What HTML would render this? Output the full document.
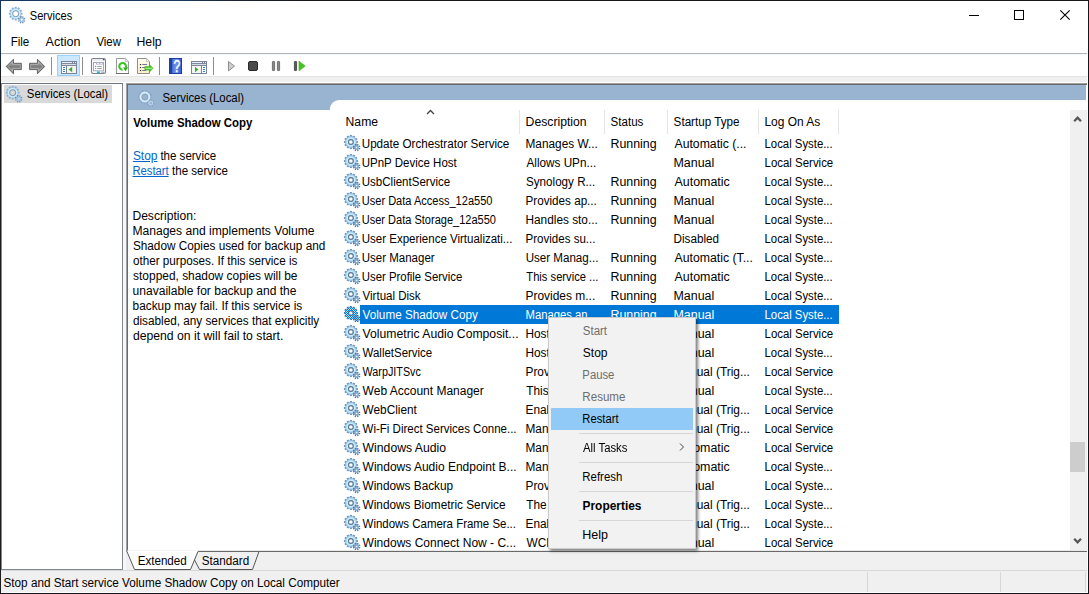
<!DOCTYPE html>
<html lang="en"><head><meta charset="utf-8"><title>Services</title>
<style>
html,body{margin:0;padding:0;}
body{width:1089px;height:594px;overflow:hidden;position:relative;background:#fff;font-family:"Liberation Sans",sans-serif;font-size:12px;line-height:14px;color:#000;}
body div,body span,body svg{position:absolute;}
.t{white-space:pre;transform-origin:0 0;}
.g,.a{overflow:visible;}
.clip{overflow:hidden;}
.menu{background:#f2f2f2;border:1px solid #ccc;box-sizing:border-box;box-shadow:2px 2px 3px rgba(0,0,0,.5);}
</style></head><body>
<svg style="position:absolute;left:0;top:0" width="0" height="0" aria-hidden="true"><defs>
<linearGradient id="ga" x1="0" y1="0" x2="0" y2="1"><stop offset="0" stop-color="#b4b4b4"/><stop offset=".5" stop-color="#7e7e7e"/><stop offset="1" stop-color="#a2a2a2"/></linearGradient>
<linearGradient id="gh" x1="0" y1="0" x2="1" y2="0"><stop offset="0" stop-color="#2a4fc4"/><stop offset=".3" stop-color="#5b7de0"/><stop offset=".6" stop-color="#6f8fe8"/><stop offset="1" stop-color="#2f56cf"/></linearGradient>
<linearGradient id="gp" x1="0" y1="0" x2="0" y2="1"><stop offset="0" stop-color="#fffdf0"/><stop offset="1" stop-color="#fbf0c8"/></linearGradient>
<radialGradient id="gg" cx="6.9" cy="7" r="6" gradientUnits="userSpaceOnUse"><stop offset=".34" stop-color="#7fa6cc"/><stop offset=".6" stop-color="#cdeefa"/><stop offset=".8" stop-color="#aed6ee"/><stop offset="1" stop-color="#7aa6d0"/></radialGradient>
<g id="gear">
 <g fill="#6c94c0"><rect x="5.90" y="0.00" width="2.0" height="2.40" transform="rotate(0.0 6.9 7)"/><rect x="5.90" y="0.00" width="2.0" height="2.40" transform="rotate(30.0 6.9 7)"/><rect x="5.90" y="0.00" width="2.0" height="2.40" transform="rotate(60.0 6.9 7)"/><rect x="5.90" y="0.00" width="2.0" height="2.40" transform="rotate(90.0 6.9 7)"/><rect x="5.90" y="0.00" width="2.0" height="2.40" transform="rotate(120.0 6.9 7)"/><rect x="5.90" y="0.00" width="2.0" height="2.40" transform="rotate(150.0 6.9 7)"/><rect x="5.90" y="0.00" width="2.0" height="2.40" transform="rotate(180.0 6.9 7)"/><rect x="5.90" y="0.00" width="2.0" height="2.40" transform="rotate(210.0 6.9 7)"/><rect x="5.90" y="0.00" width="2.0" height="2.40" transform="rotate(240.0 6.9 7)"/><rect x="5.90" y="0.00" width="2.0" height="2.40" transform="rotate(270.0 6.9 7)"/><rect x="5.90" y="0.00" width="2.0" height="2.40" transform="rotate(300.0 6.9 7)"/><rect x="5.90" y="0.00" width="2.0" height="2.40" transform="rotate(330.0 6.9 7)"/></g>
 <circle cx="6.9" cy="7" r="3.95" fill="none" stroke="url(#gg)" stroke-width="3.9"/>
 <circle cx="6.9" cy="7" r="2.4" fill="none" stroke="#587592" stroke-width="1.1" stroke-opacity=".9"/>
 <g fill="#4f739c"><rect x="11.95" y="8.70" width="1.3" height="1.80" transform="rotate(22.5 12.6 12.5)"/><rect x="11.95" y="8.70" width="1.3" height="1.80" transform="rotate(67.5 12.6 12.5)"/><rect x="11.95" y="8.70" width="1.3" height="1.80" transform="rotate(112.5 12.6 12.5)"/><rect x="11.95" y="8.70" width="1.3" height="1.80" transform="rotate(157.5 12.6 12.5)"/><rect x="11.95" y="8.70" width="1.3" height="1.80" transform="rotate(202.5 12.6 12.5)"/><rect x="11.95" y="8.70" width="1.3" height="1.80" transform="rotate(247.5 12.6 12.5)"/><rect x="11.95" y="8.70" width="1.3" height="1.80" transform="rotate(292.5 12.6 12.5)"/><rect x="11.95" y="8.70" width="1.3" height="1.80" transform="rotate(337.5 12.6 12.5)"/></g>
 <circle cx="12.6" cy="12.5" r="1.6" fill="#f2f8fd" stroke="#86acd0" stroke-width="1.6"/>
</g>
<pattern id="chk" width="2" height="2" patternUnits="userSpaceOnUse"><rect x="0" y="0" width="1" height="1" fill="#0078d7"/><rect x="1" y="1" width="1" height="1" fill="#0078d7"/></pattern>
<mask id="gm" maskUnits="userSpaceOnUse" x="0" y="0" width="17" height="17">
 <g fill="#fff"><rect x="5.90" y="0.00" width="2.0" height="2.40" transform="rotate(0.0 6.9 7)"/><rect x="5.90" y="0.00" width="2.0" height="2.40" transform="rotate(30.0 6.9 7)"/><rect x="5.90" y="0.00" width="2.0" height="2.40" transform="rotate(60.0 6.9 7)"/><rect x="5.90" y="0.00" width="2.0" height="2.40" transform="rotate(90.0 6.9 7)"/><rect x="5.90" y="0.00" width="2.0" height="2.40" transform="rotate(120.0 6.9 7)"/><rect x="5.90" y="0.00" width="2.0" height="2.40" transform="rotate(150.0 6.9 7)"/><rect x="5.90" y="0.00" width="2.0" height="2.40" transform="rotate(180.0 6.9 7)"/><rect x="5.90" y="0.00" width="2.0" height="2.40" transform="rotate(210.0 6.9 7)"/><rect x="5.90" y="0.00" width="2.0" height="2.40" transform="rotate(240.0 6.9 7)"/><rect x="5.90" y="0.00" width="2.0" height="2.40" transform="rotate(270.0 6.9 7)"/><rect x="5.90" y="0.00" width="2.0" height="2.40" transform="rotate(300.0 6.9 7)"/><rect x="5.90" y="0.00" width="2.0" height="2.40" transform="rotate(330.0 6.9 7)"/><rect x="11.95" y="8.70" width="1.3" height="1.80" transform="rotate(22.5 12.6 12.5)"/><rect x="11.95" y="8.70" width="1.3" height="1.80" transform="rotate(67.5 12.6 12.5)"/><rect x="11.95" y="8.70" width="1.3" height="1.80" transform="rotate(112.5 12.6 12.5)"/><rect x="11.95" y="8.70" width="1.3" height="1.80" transform="rotate(157.5 12.6 12.5)"/><rect x="11.95" y="8.70" width="1.3" height="1.80" transform="rotate(202.5 12.6 12.5)"/><rect x="11.95" y="8.70" width="1.3" height="1.80" transform="rotate(247.5 12.6 12.5)"/><rect x="11.95" y="8.70" width="1.3" height="1.80" transform="rotate(292.5 12.6 12.5)"/><rect x="11.95" y="8.70" width="1.3" height="1.80" transform="rotate(337.5 12.6 12.5)"/></g>
 <circle cx="6.9" cy="7" r="3.95" fill="none" stroke="#fff" stroke-width="4.2"/>
 <circle cx="12.6" cy="12.5" r="1.6" fill="#fff" stroke="#fff" stroke-width="1.6"/>
</mask>
<g id="gearsel">
 <use href="#gear"/>
 <rect x="0" y="0" width="17" height="17" fill="url(#chk)" mask="url(#gm)" shape-rendering="crispEdges"/>
</g>
<g id="gearhdr">
 <circle cx="6.9" cy="7" r="6.1" fill="none" stroke="#7e9fc6" stroke-width="1.6" stroke-dasharray="2 1.194" stroke-dashoffset="1" stroke-opacity=".7"/>
 <circle cx="6.9" cy="7" r="4.3" fill="none" stroke="#c6e5f6" stroke-width="2.2"/>
 <circle cx="6.9" cy="7" r="4.6" fill="none" stroke="#eefaff" stroke-width=".9" stroke-opacity=".55"/>
 <circle cx="6.9" cy="7" r="3.1" fill="none" stroke="#8a8f9e" stroke-width=".7" stroke-opacity=".8"/>
 <circle cx="12.8" cy="13.1" r="3" fill="none" stroke="#6f8fb8" stroke-width="1.2" stroke-dasharray="1.2 1.156" stroke-opacity=".8"/>
 <circle cx="12.8" cy="13.1" r="1.9" fill="none" stroke="#b9d6ee" stroke-width="1.2"/>
</g>
<g id="gear2">
 <g fill="#86add6"><rect x="5.70" y="-0.10" width="2.0" height="2.20" transform="rotate(0.0 6.7 6.7)"/><rect x="5.70" y="-0.10" width="2.0" height="2.20" transform="rotate(30.0 6.7 6.7)"/><rect x="5.70" y="-0.10" width="2.0" height="2.20" transform="rotate(60.0 6.7 6.7)"/><rect x="5.70" y="-0.10" width="2.0" height="2.20" transform="rotate(90.0 6.7 6.7)"/><rect x="5.70" y="-0.10" width="2.0" height="2.20" transform="rotate(120.0 6.7 6.7)"/><rect x="5.70" y="-0.10" width="2.0" height="2.20" transform="rotate(150.0 6.7 6.7)"/><rect x="5.70" y="-0.10" width="2.0" height="2.20" transform="rotate(180.0 6.7 6.7)"/><rect x="5.70" y="-0.10" width="2.0" height="2.20" transform="rotate(210.0 6.7 6.7)"/><rect x="5.70" y="-0.10" width="2.0" height="2.20" transform="rotate(240.0 6.7 6.7)"/><rect x="5.70" y="-0.10" width="2.0" height="2.20" transform="rotate(270.0 6.7 6.7)"/><rect x="5.70" y="-0.10" width="2.0" height="2.20" transform="rotate(300.0 6.7 6.7)"/><rect x="5.70" y="-0.10" width="2.0" height="2.20" transform="rotate(330.0 6.7 6.7)"/></g>
 <circle cx="6.7" cy="6.7" r="4.15" fill="none" stroke="#a3cbea" stroke-width="2.6"/>
 <circle cx="6.7" cy="6.7" r="4.1" fill="none" stroke="#d2f1fc" stroke-width="1.3"/>
 <circle cx="6.7" cy="6.7" r="3" fill="none" stroke="#62778c" stroke-width=".8" stroke-opacity=".85"/>
 <g fill="#5f86b0"><rect x="12.10" y="9.10" width="1.2" height="1.70" transform="rotate(22.5 12.7 12.8)"/><rect x="12.10" y="9.10" width="1.2" height="1.70" transform="rotate(67.5 12.7 12.8)"/><rect x="12.10" y="9.10" width="1.2" height="1.70" transform="rotate(112.5 12.7 12.8)"/><rect x="12.10" y="9.10" width="1.2" height="1.70" transform="rotate(157.5 12.7 12.8)"/><rect x="12.10" y="9.10" width="1.2" height="1.70" transform="rotate(202.5 12.7 12.8)"/><rect x="12.10" y="9.10" width="1.2" height="1.70" transform="rotate(247.5 12.7 12.8)"/><rect x="12.10" y="9.10" width="1.2" height="1.70" transform="rotate(292.5 12.7 12.8)"/><rect x="12.10" y="9.10" width="1.2" height="1.70" transform="rotate(337.5 12.7 12.8)"/></g>
 <circle cx="12.7" cy="12.8" r="1.8" fill="none" stroke="#9cc3e4" stroke-width="1.5"/>
</g>
<g id="pane">
 <rect x="0.5" y="0.5" width="15" height="12" fill="#fff" stroke="#79839a"/>
 <rect x="1" y="1" width="14" height="4" fill="#79839a"/>
 <rect x="1" y="1.05" width="10" height="1" fill="#f3f5f9"/>
 <rect x="12" y="1.05" width="1" height="1" fill="#f3f5f9"/><rect x="14" y="1.05" width="1" height="1" fill="#f3f5f9"/>
 <rect x="1" y="3.05" width="14" height="1" fill="#dde1e9"/>
</g>
<g id="tb">
 <!-- back / forward -->
 <path d="M6.2 12.5 L13.5 5.2 L13.5 9.3 L21.3 9.3 L21.3 15.6 L13.5 15.6 L13.5 19.8 Z" fill="url(#ga)" stroke="#606060" stroke-width="1" stroke-linejoin="round"/>
 <path d="M7.9 12.5 L12.5 7.9 L12.5 10.4 L20.3 10.4 L20.3 14.6 L12.5 14.6 L12.5 17.1 Z" fill="none" stroke="#c6c6c6" stroke-width=".7" stroke-opacity=".75"/>
 <path d="M44.7 12.5 L37.4 5.2 L37.4 9.3 L29.6 9.3 L29.6 15.6 L37.4 15.6 L37.4 19.8 Z" fill="url(#ga)" stroke="#606060" stroke-width="1" stroke-linejoin="round"/>
 <path d="M43 12.5 L38.4 7.9 L38.4 10.4 L30.6 10.4 L30.6 14.6 L38.4 14.6 L38.4 17.1 Z" fill="none" stroke="#c6c6c6" stroke-width=".7" stroke-opacity=".75"/>
 <!-- separators -->
 <g fill="#8d8d8d"><rect x="51" y="3" width="1" height="18"/><rect x="82" y="3" width="1" height="18"/><rect x="159" y="3" width="1" height="18"/><rect x="213" y="3" width="1" height="18"/></g>
 <!-- show/hide tree (selected) -->
 <rect x="57.5" y="1.5" width="22" height="20" fill="#cce8ff" stroke="#99d1ff"/>
 <g transform="translate(61,7)"><use href="#pane"/>
  <rect x="5" y="5" width="1" height="7" fill="#7b8497"/>
  <rect x="2" y="6" width="2" height="1" fill="#3d7ed0"/><rect x="2" y="8" width="2" height="1" fill="#3d7ed0"/><rect x="2" y="10" width="2" height="1" fill="#3d7ed0"/>
  <rect x="6" y="5" width="9" height="7" fill="#f3f3f3"/>
  <path d="M11.2 5.8 L11.2 11.2 L7.6 8.5 Z" fill="#3faa1e"/>
 </g>
 <!-- properties -->
 <rect x="91.5" y="4.5" width="14" height="15" rx="1.7" fill="#fff" stroke="#7b7f88" stroke-width="1.1"/>
 <rect x="92.6" y="5.5" width="10" height="0.9" fill="#d4d8df"/><rect x="102.9" y="5" width="1.6" height="1.4" fill="#3b5998"/>
 <rect x="93.5" y="8.5" width="10" height="8.3" fill="#fff" stroke="#a4a8bc" stroke-width="1"/>
 <rect x="96" y="8.5" width="7.5" height="2" fill="#a9adc0"/>
 <rect x="94" y="9" width="2" height="1.6" fill="#fff"/>
 <rect x="97" y="9.05" width="2" height="0.9" fill="#fff"/><rect x="100.3" y="9.05" width="2" height="0.9" fill="#fff"/>
 <rect x="94.8" y="11.7" width="1.4" height="1.4" rx=".5" fill="#19b5f5"/><rect x="97.1" y="11.95" width="4.7" height="0.9" fill="#9a9a9a"/>
 <rect x="95" y="13.9" width="1.1" height="1.1" fill="#9a9a9a"/><rect x="97.1" y="14" width="4.7" height="0.9" fill="#9a9a9a"/>
 <rect x="96.9" y="17.4" width="3.1" height="1.6" fill="#19c0f7"/><rect x="101.3" y="17.6" width="3.2" height="1.4" fill="#b4b4b4"/>
 <!-- refresh -->
 <path d="M116.5 4.5 L125.6 4.5 L128.5 7.4 L128.5 19.5 L116.5 19.5 Z" fill="#fff" stroke="#999" stroke-width="1"/>
 <rect x="116" y="19" width="13" height="1" fill="#6f6f6f"/>
 <path d="M125.4 4.6 L125.4 7.6 L128.4 7.6" fill="#f2f2f2" stroke="#b5b5b5" stroke-width=".8"/>
 <path d="M122.6 15.8 A3.4 3.4 0 1 1 125.9 13.4" fill="none" stroke="#3cc422" stroke-width="2.1"/>
 <path d="M123 13.4 L128.2 13.2 L125.6 17.2 Z" fill="#22b30e"/>
 <!-- export list -->
 <path d="M137.5 4.5 L146.6 4.5 L149.5 7.4 L149.5 19.5 L137.5 19.5 Z" fill="url(#gp)" stroke="#8f8f8f" stroke-width="1"/>
 <path d="M146.4 4.6 L146.4 7.6 L149.4 7.6" fill="#fff" stroke="#b5b5b5" stroke-width=".8"/>
 <g fill="#2a2a2a"><rect x="139.9" y="10" width="1.2" height="1.1"/><rect x="139.9" y="13" width="1.2" height="1.1"/><rect x="139.9" y="16" width="1.2" height="1.1"/></g>
 <g fill="#6f6ca6"><rect x="142.2" y="10.05" width="4.8" height=".95"/><rect x="142.2" y="13.05" width="3" height=".95"/><rect x="142.2" y="16.05" width="4" height=".95"/></g>
 <path d="M144.8 12.6 L149.4 12.6 L149.4 10.2 L153.1 14.3 L149.4 18.3 L149.4 16.1 L144.8 16.1 Z" fill="#4fc433" stroke="#3bae20" stroke-width=".5" stroke-linejoin="round"/>
 <path d="M146 14.3 L151.6 14.3" stroke="#9cec80" stroke-width="1.3" stroke-linecap="round" fill="none"/>
 <!-- help -->
 <rect x="169.5" y="4.5" width="12" height="15" fill="url(#gh)" stroke="#1d3ba6" stroke-width="1"/>
 <rect x="170" y="5" width="2.2" height="14" fill="#22409f"/>
 <text x="177" y="18.2" font-family="Liberation Sans, sans-serif" font-size="17" fill="#fff" stroke="#fff" stroke-width=".45" text-anchor="middle" transform="translate(177 0) scale(.72 1) translate(-177 0)">?</text>
 <!-- action pane -->
 <g transform="translate(191,7)"><use href="#pane"/>
  <rect x="10" y="5" width="1" height="7" fill="#7b8497"/>
  <rect x="12" y="6" width="2" height="1" fill="#3d7ed0"/><rect x="12" y="8" width="2" height="1" fill="#3d7ed0"/><rect x="12" y="10" width="2" height="1" fill="#3d7ed0"/>
  <rect x="1" y="5" width="9" height="7" fill="#f6f6f6"/>
  <path d="M4 5.8 L4 11.2 L7.4 8.5 Z" fill="#3faa1e"/>
 </g>
 <!-- play / stop / pause / restart -->
 <path d="M228.5 7.5 L234.5 12.2 L228.5 16.9 Z" fill="#cfcfcf" stroke="#8e8e8e" stroke-width="1" stroke-linejoin="round"/>
 <rect x="248.5" y="7.5" width="9" height="9" rx="1.5" fill="#4a4a4a" stroke="#2b2b2b" stroke-width="1"/>
 <rect x="272.4" y="7.4" width="2.2" height="9.2" rx=".6" fill="#8a8a8a" stroke="#5c5c5c" stroke-width=".8"/>
 <rect x="277.4" y="7.4" width="2.2" height="9.2" rx=".6" fill="#8a8a8a" stroke="#5c5c5c" stroke-width=".8"/>
 <rect x="294.4" y="7.4" width="2.2" height="9.2" rx=".6" fill="#5a5a5a" stroke="#3a3a3a" stroke-width=".8"/>
 <path d="M299 7.2 L305.2 12 L299 16.8 Z" fill="#45c520" stroke="#35a816" stroke-width=".6" stroke-linejoin="round"/>
</g>
</defs></svg>

<div style="left:0px;top:0px;width:1089px;height:594px;background:#fff;"></div>
<div style="left:1px;top:77px;width:1087px;height:516px;background:#f0f0f0;"></div>
<svg class="g" style="left:9px;top:7px" width="17" height="17" viewBox="0 0 17 17"><use href="#gear2"/></svg>
<span class="t" style="left:29px;top:9px;transform:translateX(0.74px) scaleX(0.9246);">Services</span>
<svg class="a" style="left:960px;top:5px" width="120" height="20" viewBox="0 0 120 20" shape-rendering="crispEdges"><rect x="9" y="10" width="10" height="1" fill="#000"/><rect x="54.5" y="5.5" width="9" height="9" fill="none" stroke="#000" stroke-width="1"/><g shape-rendering="auto"><path d="M100.3 5.3 L109.7 14.7 M109.7 5.3 L100.3 14.7" stroke="#000" stroke-width="1.1" fill="none"/></g></svg>
<span class="t" style="left:10px;top:35px;transform:translateX(0.63px) scaleX(0.9665);">File</span>
<span class="t" style="left:45px;top:35px;transform:translateX(0.50px) scaleX(1.0491);">Action</span>
<span class="t" style="left:96px;top:35px;transform:translateX(0.40px) scaleX(0.9535);">View</span>
<span class="t" style="left:136px;top:35px;transform:translateX(0.48px) scaleX(1.0216);">Help</span>
<div style="left:1px;top:53px;width:1087px;height:1px;background:#b4b5b5;"></div>
<div style="left:1px;top:54px;width:1087px;height:22px;background:#fff;"></div>
<div style="left:1px;top:54px;width:1087px;height:1px;background:#f5f8fd;"></div>
<div style="left:1px;top:76px;width:1087px;height:1px;background:#e3e3e3;"></div>
<div style="left:1px;top:82px;width:1087px;height:1px;background:#fff;"></div>
<svg class="a" style="left:0;top:54px" width="320" height="23" viewBox="0 0 320 23"><use href="#tb"/></svg>
<div style="left:1px;top:83px;width:122px;height:487px;background:#fff;border-top:1px solid #6d7486;border-left:1px solid #828790;border-right:1px solid #828790;border-bottom:1px solid #828790;box-sizing:border-box;"></div>
<div style="left:4px;top:85px;width:108px;height:18px;background:#d9d9d9;"></div>
<svg class="g" style="left:6px;top:86px" width="17" height="17" viewBox="0 0 17 17"><use href="#gear2"/></svg>
<span class="t" style="left:26px;top:87px;transform:translateX(0.83px) scaleX(0.9446);">Services (Local)</span>
<div style="left:126px;top:83px;width:961px;height:468px;background:#696969;border-top:1px solid #a0a0a0;border-left:1px solid #a0a0a0;box-sizing:border-box;"></div>
<div style="left:128px;top:85px;width:959px;height:466px;background:#fff;"></div>
<div style="left:123px;top:83px;width:3px;height:487px;background:#f6f6f6;"></div>
<div style="left:128px;top:85px;width:958px;height:25px;background:#99b4d1;"></div>
<div style="left:330px;top:100px;width:756px;height:10px;background:#fff;border-top-left-radius:9px;"></div>
<div style="left:1086px;top:85px;width:1px;height:466px;background:#fff;"></div>
<svg class="g" style="left:137.5px;top:89.8px" width="17" height="17" viewBox="0 0 17 17"><use href="#gearhdr"/></svg>
<span class="t" style="left:162px;top:91px;transform:translateX(0.53px) scaleX(0.9469);">Services (Local)</span>
<span class="t" style="left:133px;top:116px;font-weight:700;transform:translateX(0.30px) scaleX(0.9520);">Volume Shadow Copy</span>
<span class="t" style="left:132px;top:149px;color:#0066cc;transform:translateX(0.90px) scaleX(0.9958);text-decoration:underline;">Stop</span>
<span class="t" style="left:160px;top:149px;transform:translateX(0.41px) scaleX(0.9599);">the service</span>
<span class="t" style="left:132px;top:164px;color:#0066cc;transform:translateX(0.47px) scaleX(0.9335);text-decoration:underline;">Restart</span>
<span class="t" style="left:172px;top:164px;transform:translateX(0.01px) scaleX(0.9634);">the service</span>
<span class="t" style="left:132px;top:209px;transform:translateX(0.39px) scaleX(1.0082);">Description:</span>
<span class="t" style="left:132px;top:224px;transform:translateX(0.39px) scaleX(1.0078);">Manages and implements Volume</span>
<span class="t" style="left:132px;top:239px;transform:translateX(0.91px) scaleX(0.9810);">Shadow Copies used for backup and</span>
<span class="t" style="left:132px;top:254px;transform:translateX(0.91px) scaleX(0.9750);">other purposes. If this service is</span>
<span class="t" style="left:133px;top:269px;transform:translateX(0.10px) scaleX(0.9933);">stopped, shadow copies will be</span>
<span class="t" style="left:132px;top:284px;transform:translateX(0.60px) scaleX(1.0025);">unavailable for backup and the</span>
<span class="t" style="left:132px;top:299px;transform:translateX(0.61px) scaleX(0.9860);">backup may fail. If this service is</span>
<span class="t" style="left:132px;top:314px;transform:translateX(0.91px) scaleX(0.9800);">disabled, any services that explicitly</span>
<span class="t" style="left:132px;top:329px;transform:translateX(0.89px) scaleX(1.0164);">depend on it will fail to start.</span>
<div style="left:519px;top:110px;width:1px;height:24px;background:#e5e5e5;"></div>
<div style="left:604px;top:110px;width:1px;height:24px;background:#e5e5e5;"></div>
<div style="left:667px;top:110px;width:1px;height:24px;background:#e5e5e5;"></div>
<div style="left:758px;top:110px;width:1px;height:24px;background:#e5e5e5;"></div>
<div style="left:838px;top:110px;width:1px;height:24px;background:#e5e5e5;"></div>
<svg class="a" style="left:426px;top:109px" width="10" height="7" viewBox="0 0 10 7"><path d="M1.5 4.5 L4.5 1.5 L7.5 4.5" fill="none" stroke="#404040" stroke-width="1.25" stroke-linecap="square"/></svg>
<span class="t" style="left:345px;top:115px;transform:translateX(0.59px) scaleX(1.0131);">Name</span>
<span class="t" style="left:525px;top:115px;transform:translateX(0.58px) scaleX(1.0172);">Description</span>
<span class="t" style="left:610px;top:115px;transform:translateX(0.62px) scaleX(0.9607);">Status</span>
<span class="t" style="left:673px;top:115px;transform:translateX(0.61px) scaleX(0.9716);">Startup Type</span>
<span class="t" style="left:764px;top:115px;transform:translateX(0.40px) scaleX(0.9963);">Log On As</span>
<div class="clip" style="left:330px;top:110px;width:740px;height:440px;">
<svg class="g" style="left:14px;top:25px" width="17" height="17" viewBox="0 0 17 17"><use href="#gear"/></svg>
<span class="t" style="left:31px;top:27px;transform:translateX(0.73px) scaleX(0.9708);">Update Orchestrator Service</span>
<span class="t" style="left:195px;top:27px;transform:translateX(0.52px) scaleX(0.9846);">Manages W...</span>
<span class="t" style="left:280px;top:27px;transform:translateX(0.47px) scaleX(1.0326);">Running</span>
<span class="t" style="left:344px;top:27px;transform:translateX(0.50px) scaleX(1.0187);">Automatic (...</span>
<span class="t" style="left:434px;top:27px;transform:translateX(0.55px) scaleX(0.9457);">Local Syste...</span>
<svg class="g" style="left:14px;top:44px" width="17" height="17" viewBox="0 0 17 17"><use href="#gear"/></svg>
<span class="t" style="left:31px;top:46px;transform:translateX(0.74px) scaleX(0.9582);">UPnP Device Host</span>
<span class="t" style="left:196px;top:46px;transform:translateX(0.50px) scaleX(0.9772);">Allows UPn...</span>
<span class="t" style="left:343px;top:46px;transform:translateX(0.46px) scaleX(1.0372);">Manual</span>
<span class="t" style="left:434px;top:46px;transform:translateX(0.55px) scaleX(0.9533);">Local Service</span>
<svg class="g" style="left:14px;top:63px" width="17" height="17" viewBox="0 0 17 17"><use href="#gear"/></svg>
<span class="t" style="left:31px;top:65px;transform:translateX(0.73px) scaleX(0.9614);">UsbClientService</span>
<span class="t" style="left:196px;top:65px;transform:translateX(0.02px) scaleX(0.9699);">Synology R...</span>
<span class="t" style="left:280px;top:65px;transform:translateX(0.47px) scaleX(1.0326);">Running</span>
<span class="t" style="left:344px;top:65px;transform:translateX(0.50px) scaleX(1.0358);">Automatic</span>
<span class="t" style="left:434px;top:65px;transform:translateX(0.55px) scaleX(0.9457);">Local Syste...</span>
<svg class="g" style="left:14px;top:82px" width="17" height="17" viewBox="0 0 17 17"><use href="#gear"/></svg>
<span class="t" style="left:31px;top:84px;transform:translateX(0.77px) scaleX(0.9197);">User Data Access_12a550</span>
<span class="t" style="left:195px;top:84px;transform:translateX(0.53px) scaleX(0.9719);">Provides ap...</span>
<span class="t" style="left:280px;top:84px;transform:translateX(0.47px) scaleX(1.0326);">Running</span>
<span class="t" style="left:343px;top:84px;transform:translateX(0.46px) scaleX(1.0372);">Manual</span>
<span class="t" style="left:434px;top:84px;transform:translateX(0.55px) scaleX(0.9457);">Local Syste...</span>
<svg class="g" style="left:14px;top:101px" width="17" height="17" viewBox="0 0 17 17"><use href="#gear"/></svg>
<span class="t" style="left:31px;top:103px;transform:translateX(0.77px) scaleX(0.9185);">User Data Storage_12a550</span>
<span class="t" style="left:195px;top:103px;transform:translateX(0.52px) scaleX(0.9846);">Handles sto...</span>
<span class="t" style="left:280px;top:103px;transform:translateX(0.47px) scaleX(1.0326);">Running</span>
<span class="t" style="left:343px;top:103px;transform:translateX(0.46px) scaleX(1.0372);">Manual</span>
<span class="t" style="left:434px;top:103px;transform:translateX(0.55px) scaleX(0.9457);">Local Syste...</span>
<svg class="g" style="left:14px;top:120px" width="17" height="17" viewBox="0 0 17 17"><use href="#gear"/></svg>
<span class="t" style="left:31px;top:122px;transform:translateX(0.74px) scaleX(0.9588);">User Experience Virtualizati...</span>
<span class="t" style="left:195px;top:122px;transform:translateX(0.54px) scaleX(0.9618);">Provides su...</span>
<span class="t" style="left:343px;top:122px;transform:translateX(0.52px) scaleX(0.9755);">Disabled</span>
<span class="t" style="left:434px;top:122px;transform:translateX(0.55px) scaleX(0.9457);">Local Syste...</span>
<svg class="g" style="left:14px;top:139px" width="17" height="17" viewBox="0 0 17 17"><use href="#gear"/></svg>
<span class="t" style="left:31px;top:141px;transform:translateX(0.74px) scaleX(0.9586);">User Manager</span>
<span class="t" style="left:195px;top:141px;transform:translateX(0.63px) scaleX(0.9659);">User Manag...</span>
<span class="t" style="left:280px;top:141px;transform:translateX(0.47px) scaleX(1.0326);">Running</span>
<span class="t" style="left:344px;top:141px;transform:translateX(0.50px) scaleX(1.0225);">Automatic (T...</span>
<span class="t" style="left:434px;top:141px;transform:translateX(0.55px) scaleX(0.9457);">Local Syste...</span>
<svg class="g" style="left:14px;top:158px" width="17" height="17" viewBox="0 0 17 17"><use href="#gear"/></svg>
<span class="t" style="left:31px;top:160px;transform:translateX(0.75px) scaleX(0.9484);">User Profile Service</span>
<span class="t" style="left:196px;top:160px;transform:translateX(0.31px) scaleX(0.9317);">This service ...</span>
<span class="t" style="left:280px;top:160px;transform:translateX(0.47px) scaleX(1.0326);">Running</span>
<span class="t" style="left:344px;top:160px;transform:translateX(0.50px) scaleX(1.0358);">Automatic</span>
<span class="t" style="left:434px;top:160px;transform:translateX(0.55px) scaleX(0.9457);">Local Syste...</span>
<svg class="g" style="left:14px;top:177px" width="17" height="17" viewBox="0 0 17 17"><use href="#gear"/></svg>
<span class="t" style="left:32px;top:179px;transform:translateX(0.60px) scaleX(0.9587);">Virtual Disk</span>
<span class="t" style="left:195px;top:179px;transform:translateX(0.50px) scaleX(0.9956);">Provides m...</span>
<span class="t" style="left:280px;top:179px;transform:translateX(0.47px) scaleX(1.0326);">Running</span>
<span class="t" style="left:343px;top:179px;transform:translateX(0.46px) scaleX(1.0372);">Manual</span>
<span class="t" style="left:434px;top:179px;transform:translateX(0.55px) scaleX(0.9457);">Local Syste...</span>
<div style="left:30px;top:195px;width:479px;height:19px;background:#0078d7;"></div>
<svg class="g" style="left:14px;top:196px" width="17" height="17" viewBox="0 0 17 17"><use href="#gearsel"/></svg>
<span class="t" style="left:32px;top:198px;color:#fff;transform:translateX(0.60px) scaleX(0.9754);">Volume Shadow Copy</span>
<span class="t" style="left:195px;top:198px;color:#fff;transform:translateX(0.56px) scaleX(0.9392);">Manages an...</span>
<span class="t" style="left:280px;top:198px;color:#fff;transform:translateX(0.47px) scaleX(1.0326);">Running</span>
<span class="t" style="left:343px;top:198px;color:#fff;transform:translateX(0.46px) scaleX(1.0372);">Manual</span>
<span class="t" style="left:434px;top:198px;color:#fff;transform:translateX(0.55px) scaleX(0.9457);">Local Syste...</span>
<svg class="g" style="left:14px;top:215px" width="17" height="17" viewBox="0 0 17 17"><use href="#gear"/></svg>
<span class="t" style="left:32px;top:217px;transform:translateX(0.60px) scaleX(1.0164);">Volumetric Audio Composit...</span>
<span class="t" style="left:195px;top:217px;transform:translateX(0.51px) scaleX(0.9850);">Hosts spatia...</span>
<span class="t" style="left:343px;top:217px;transform:translateX(0.46px) scaleX(1.0372);">Manual</span>
<span class="t" style="left:434px;top:217px;transform:translateX(0.55px) scaleX(0.9533);">Local Service</span>
<svg class="g" style="left:14px;top:234px" width="17" height="17" viewBox="0 0 17 17"><use href="#gear"/></svg>
<span class="t" style="left:32px;top:236px;transform:translateX(0.60px) scaleX(0.9544);">WalletService</span>
<span class="t" style="left:195px;top:236px;transform:translateX(0.51px) scaleX(0.9850);">Hosts objec...</span>
<span class="t" style="left:343px;top:236px;transform:translateX(0.46px) scaleX(1.0372);">Manual</span>
<span class="t" style="left:434px;top:236px;transform:translateX(0.55px) scaleX(0.9457);">Local Syste...</span>
<svg class="g" style="left:14px;top:253px" width="17" height="17" viewBox="0 0 17 17"><use href="#gear"/></svg>
<span class="t" style="left:32px;top:255px;transform:translateX(0.60px) scaleX(0.8978);">WarpJITSvc</span>
<span class="t" style="left:195px;top:255px;transform:translateX(0.51px) scaleX(0.9850);">Provides a JI...</span>
<span class="t" style="left:343px;top:255px;transform:translateX(0.51px) scaleX(0.9933);">Manual (Trig...</span>
<span class="t" style="left:434px;top:255px;transform:translateX(0.55px) scaleX(0.9533);">Local Service</span>
<svg class="g" style="left:14px;top:272px" width="17" height="17" viewBox="0 0 17 17"><use href="#gear"/></svg>
<span class="t" style="left:32px;top:274px;transform:translateX(0.60px) scaleX(1.0000);">Web Account Manager</span>
<span class="t" style="left:196px;top:274px;transform:translateX(0.30px) scaleX(0.9850);">This service ...</span>
<span class="t" style="left:343px;top:274px;transform:translateX(0.46px) scaleX(1.0372);">Manual</span>
<span class="t" style="left:434px;top:274px;transform:translateX(0.55px) scaleX(0.9457);">Local Syste...</span>
<svg class="g" style="left:14px;top:291px" width="17" height="17" viewBox="0 0 17 17"><use href="#gear"/></svg>
<span class="t" style="left:32px;top:293px;transform:translateX(0.60px) scaleX(0.9837);">WebClient</span>
<span class="t" style="left:195px;top:293px;transform:translateX(0.51px) scaleX(0.9850);">Enables Win...</span>
<span class="t" style="left:343px;top:293px;transform:translateX(0.51px) scaleX(0.9933);">Manual (Trig...</span>
<span class="t" style="left:434px;top:293px;transform:translateX(0.55px) scaleX(0.9533);">Local Service</span>
<svg class="g" style="left:14px;top:310px" width="17" height="17" viewBox="0 0 17 17"><use href="#gear"/></svg>
<span class="t" style="left:32px;top:312px;transform:translateX(0.60px) scaleX(0.9580);">Wi-Fi Direct Services Conne...</span>
<span class="t" style="left:195px;top:312px;transform:translateX(0.51px) scaleX(0.9850);">Manages co...</span>
<span class="t" style="left:343px;top:312px;transform:translateX(0.51px) scaleX(0.9933);">Manual (Trig...</span>
<span class="t" style="left:434px;top:312px;transform:translateX(0.55px) scaleX(0.9533);">Local Service</span>
<svg class="g" style="left:14px;top:329px" width="17" height="17" viewBox="0 0 17 17"><use href="#gear"/></svg>
<span class="t" style="left:32px;top:331px;transform:translateX(0.60px) scaleX(1.0172);">Windows Audio</span>
<span class="t" style="left:195px;top:331px;transform:translateX(0.51px) scaleX(0.9850);">Manages au...</span>
<span class="t" style="left:280px;top:331px;transform:translateX(0.47px) scaleX(1.0326);">Running</span>
<span class="t" style="left:344px;top:331px;transform:translateX(0.50px) scaleX(1.0358);">Automatic</span>
<span class="t" style="left:434px;top:331px;transform:translateX(0.55px) scaleX(0.9533);">Local Service</span>
<svg class="g" style="left:14px;top:348px" width="17" height="17" viewBox="0 0 17 17"><use href="#gear"/></svg>
<span class="t" style="left:32px;top:350px;transform:translateX(0.60px) scaleX(0.9993);">Windows Audio Endpoint B...</span>
<span class="t" style="left:195px;top:350px;transform:translateX(0.51px) scaleX(0.9850);">Manages au...</span>
<span class="t" style="left:280px;top:350px;transform:translateX(0.47px) scaleX(1.0326);">Running</span>
<span class="t" style="left:344px;top:350px;transform:translateX(0.50px) scaleX(1.0358);">Automatic</span>
<span class="t" style="left:434px;top:350px;transform:translateX(0.55px) scaleX(0.9457);">Local Syste...</span>
<svg class="g" style="left:14px;top:367px" width="17" height="17" viewBox="0 0 17 17"><use href="#gear"/></svg>
<span class="t" style="left:32px;top:369px;transform:translateX(0.60px) scaleX(0.9836);">Windows Backup</span>
<span class="t" style="left:195px;top:369px;transform:translateX(0.51px) scaleX(0.9850);">Provides Wi...</span>
<span class="t" style="left:343px;top:369px;transform:translateX(0.46px) scaleX(1.0372);">Manual</span>
<span class="t" style="left:434px;top:369px;transform:translateX(0.55px) scaleX(0.9457);">Local Syste...</span>
<svg class="g" style="left:14px;top:386px" width="17" height="17" viewBox="0 0 17 17"><use href="#gear"/></svg>
<span class="t" style="left:32px;top:388px;transform:translateX(0.60px) scaleX(0.9834);">Windows Biometric Service</span>
<span class="t" style="left:196px;top:388px;transform:translateX(0.30px) scaleX(0.9850);">The Windo...</span>
<span class="t" style="left:343px;top:388px;transform:translateX(0.51px) scaleX(0.9933);">Manual (Trig...</span>
<span class="t" style="left:434px;top:388px;transform:translateX(0.55px) scaleX(0.9457);">Local Syste...</span>
<svg class="g" style="left:14px;top:405px" width="17" height="17" viewBox="0 0 17 17"><use href="#gear"/></svg>
<span class="t" style="left:32px;top:407px;transform:translateX(0.60px) scaleX(0.9543);">Windows Camera Frame Se...</span>
<span class="t" style="left:195px;top:407px;transform:translateX(0.51px) scaleX(0.9850);">Enables mul...</span>
<span class="t" style="left:343px;top:407px;transform:translateX(0.51px) scaleX(0.9933);">Manual (Trig...</span>
<span class="t" style="left:434px;top:407px;transform:translateX(0.55px) scaleX(0.9457);">Local Syste...</span>
<svg class="g" style="left:14px;top:424px" width="17" height="17" viewBox="0 0 17 17"><use href="#gear"/></svg>
<span class="t" style="left:32px;top:426px;transform:translateX(0.60px) scaleX(1.0007);">Windows Connect Now - C...</span>
<span class="t" style="left:196px;top:426px;transform:translateX(0.50px) scaleX(0.9850);">WCNCSVC ...</span>
<span class="t" style="left:343px;top:426px;transform:translateX(0.46px) scaleX(1.0372);">Manual</span>
<span class="t" style="left:434px;top:426px;transform:translateX(0.55px) scaleX(0.9533);">Local Service</span>
</div>
<div style="left:1070px;top:110px;width:16px;height:440px;background:#f0f0f0;"></div>
<div style="left:1086px;top:110px;width:1px;height:440px;background:#ececec;"></div>
<div style="left:1070px;top:442px;width:15px;height:30px;background:#cdcdcd;"></div>
<svg class="a" style="left:1070px;top:110px" width="16" height="440" viewBox="0 0 16 440"><path d="M4.2 11.2 L7.6 7.7 L11 11.2" fill="none" stroke="#555" stroke-width="2.2"/><path d="M4.2 428.8 L7.6 432.3 L11 428.8" fill="none" stroke="#555" stroke-width="2.2"/></svg>
<div style="left:128px;top:550px;width:958px;height:1px;background:#e8e8e8;"></div>
<svg class="a" style="left:120px;top:549px" width="160" height="22" viewBox="0 0 160 22"><path d="M6 1.5 L78 1.5 L70.5 20.5 L14.5 20.5 Z" fill="#fff"/><path d="M78.5 2.5 L139 2.5 L132.5 20.5 L79.5 20.5 L74.5 11 Z" fill="#f0f0f0"/><path d="M6.5 1.5 L14.5 20.5 L70.5 20.5 L78 2.5" fill="none" stroke="#555" stroke-width="1"/><path d="M74.5 11 L79.5 20.5 L132.5 20.5 L139 2.5" fill="none" stroke="#555" stroke-width="1"/></svg>
<div style="left:198px;top:551px;width:889px;height:1px;background:#696969;"></div>
<span class="t" style="left:137px;top:554px;transform:translateX(0.63px) scaleX(0.9693);">Extended</span>
<span class="t" style="left:201px;top:554px;transform:translateX(0.71px) scaleX(0.9747);">Standard</span>
<div style="left:1px;top:570px;width:1087px;height:1px;background:#d7d7d7;"></div>
<span class="t" style="left:3px;top:576px;transform:translateX(0.51px) scaleX(0.9767);">Stop and Start service Volume Shadow Copy on Local Computer</span>
<div style="left:867px;top:572px;width:1px;height:20px;background:#d7d7d7;"></div>
<div style="left:1000px;top:572px;width:1px;height:20px;background:#d7d7d7;"></div>
<div style="left:1085px;top:572px;width:1px;height:20px;background:#d7d7d7;"></div>
<div style="left:1px;top:592px;width:1087px;height:1px;background:#fff;"></div>
<div style="left:1087px;top:1px;width:1px;height:592px;background:#fff;"></div>
<div class="menu" style="left:548px;top:317px;width:148px;height:232px;"></div>
<div style="left:551px;top:408px;width:142px;height:22px;background:#91c9f7;"></div>
<div style="left:579px;top:433px;width:114px;height:1px;background:#d7d7d7;"></div>
<div style="left:579px;top:462px;width:114px;height:1px;background:#d7d7d7;"></div>
<div style="left:579px;top:491px;width:114px;height:1px;background:#d7d7d7;"></div>
<div style="left:579px;top:520px;width:114px;height:1px;background:#d7d7d7;"></div>
<span class="t" style="left:582px;top:324px;color:#6d6d6d;transform:translateX(0.82px) scaleX(0.9556);">Start</span>
<span class="t" style="left:582px;top:346px;transform:translateX(0.80px) scaleX(1.0000);">Stop</span>
<span class="t" style="left:582px;top:368px;color:#6d6d6d;transform:translateX(0.36px) scaleX(0.9417);">Pause</span>
<span class="t" style="left:582px;top:390px;color:#6d6d6d;transform:translateX(0.33px) scaleX(0.9653);">Resume</span>
<span class="t" style="left:582px;top:412px;transform:translateX(0.36px) scaleX(0.9362);">Restart</span>
<span class="t" style="left:583px;top:441px;transform:translateX(0.00px) scaleX(0.9422);">All Tasks</span>
<span class="t" style="left:582px;top:470px;transform:translateX(0.35px) scaleX(0.9502);">Refresh</span>
<span class="t" style="left:582px;top:499px;font-weight:700;transform:translateX(0.51px) scaleX(0.9931);">Properties</span>
<span class="t" style="left:582px;top:528px;transform:translateX(0.26px) scaleX(1.0431);">Help</span>
<svg class="a" style="left:678px;top:442px" width="8" height="10" viewBox="0 0 8 10"><path d="M2 1.5 L5.5 5 L2 8.5" fill="none" stroke="#444" stroke-width="1"/></svg>
<div style="left:0px;top:0px;width:1089px;height:1px;background:linear-gradient(90deg,#17365d 0,#1b3a5f 180px,#1b2534 230px,#18181c 300px,#18181c 100%);"></div>
<div style="left:0px;top:0px;width:1px;height:594px;background:linear-gradient(180deg,#17365d 0,#17365d 48px,#1c1d20 70px,#1c1d20 100%);"></div>
<div style="left:1088px;top:0px;width:1px;height:594px;background:#16161a;"></div>
<div style="left:0px;top:593px;width:1089px;height:1px;background:#16161a;"></div>
</body></html>
